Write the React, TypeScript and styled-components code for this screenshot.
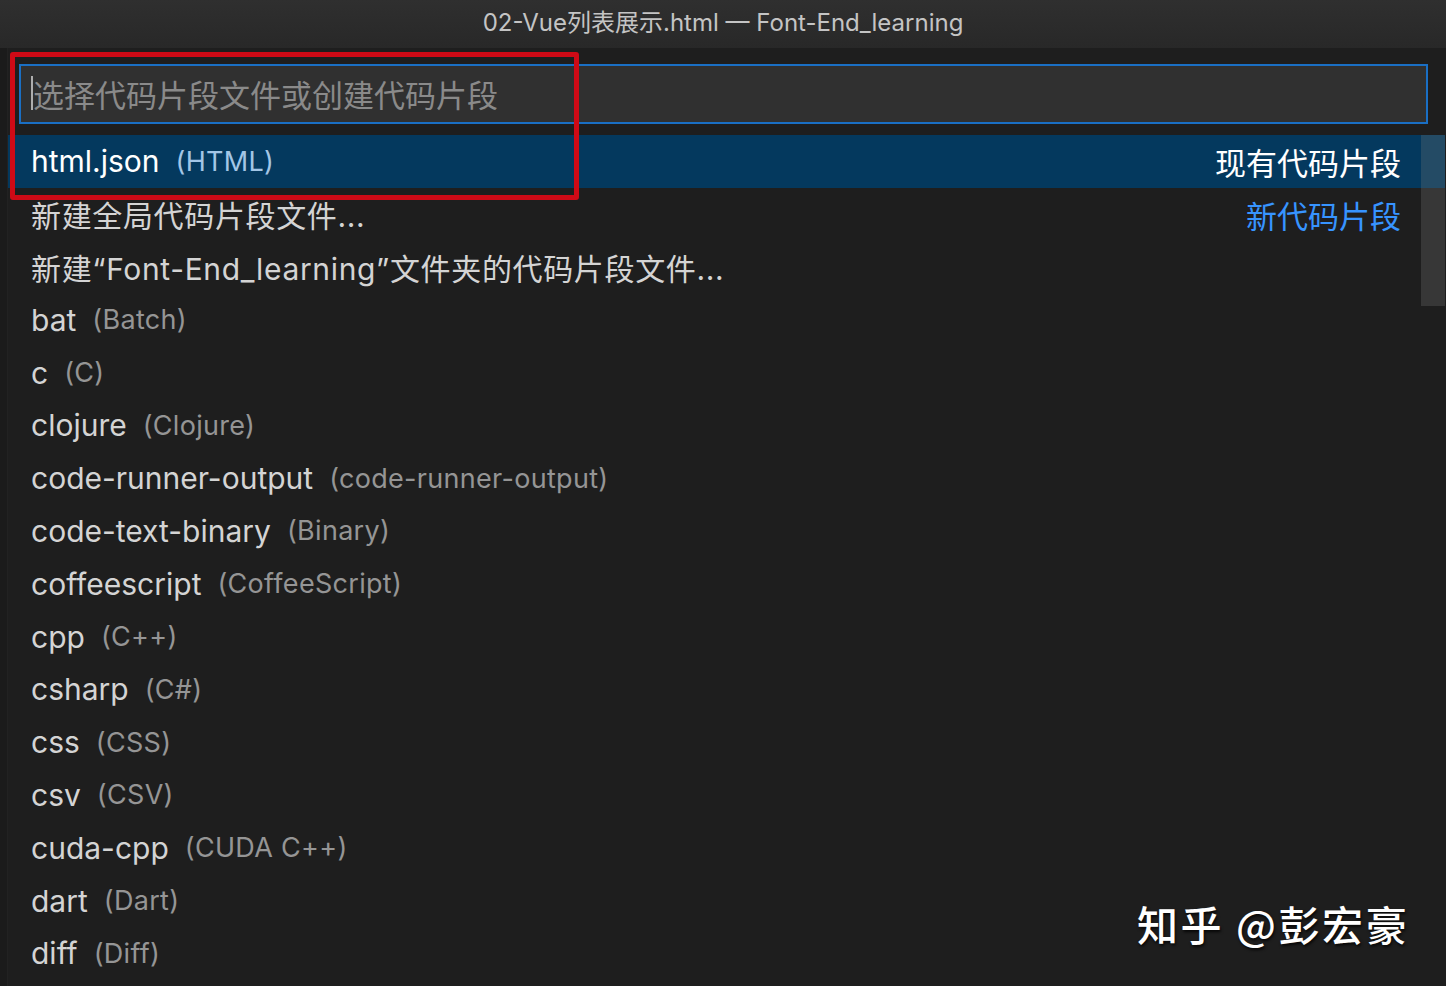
import React from "react";
import styled, { createGlobalStyle } from "styled-components";

const Global = createGlobalStyle`
  html, body { margin: 0; padding: 0; background: #1e1e1e; }
  body { font-family: Inter, "Noto Sans CJK SC", sans-serif; }
  * { box-sizing: border-box; }
`;

const Page = styled.div`
  position: relative;
  width: 1446px;
  height: 986px;
  overflow: hidden;
  display: flex;
  flex-direction: column;
  background: #1e1e1e;
`;

const TitleBar = styled.div`
  height: 48px;
  flex: none;
  display: flex;
  align-items: center;
  justify-content: center;
  background: linear-gradient(#2f2f2f, #282828);
  color: #c4c4c4;
  font-size: 24px;
  font-family: Inter, "Noto Sans CJK SC", sans-serif;
  padding-bottom: 8px;
`;

const Body = styled.div`
  flex: 1;
  display: flex;
  min-height: 0;
`;

const EdgeStrip = styled.div`
  width: 8px;
  flex: none;
  background: #1b1b1b;
  border-right: 1px solid #222;
`;

const Picker = styled.div`
  position: relative;
  flex: 1;
  display: flex;
  flex-direction: column;
  padding-top: 16px;
  background: #1e1e1e;
`;

const InputBox = styled.div`
  margin: 0 18px 0 11px;
  height: 60px;
  border: 2px solid #1a6fc4;
  background: #303030;
  display: flex;
  align-items: center;
  padding-left: 10px;
  padding-bottom: 2px;
`;

const Caret = styled.span`
  width: 2px;
  height: 34px;
  background: #aeaeae;
  flex: none;
`;

const Placeholder = styled.span`
  color: #8a8a8a;
  font-size: 31px;
  font-family: "Noto Sans CJK SC", sans-serif;
`;

const List = styled.div`
  position: relative;
  margin-top: 11px;
  margin-right: 1px;
  display: flex;
  flex-direction: column;
`;

const Row = styled.div<{ $selected?: boolean }>`
  height: 52.8px;
  display: flex;
  align-items: center;
  padding: 0 44px 0 23px;
  background: ${(p) => (p.$selected ? "#04395e" : "transparent")};
`;

const Label = styled.span<{ $selected?: boolean; $cjk?: boolean }>`
  color: ${(p) => (p.$selected ? "#ffffff" : "#d4d4d4")};
  font-size: 30px;
  font-family: Inter, "Noto Sans CJK SC", sans-serif;
  letter-spacing: ${(p) => (p.$cjk ? "0.65px" : "0")};
  white-space: nowrap;
`;

const Desc = styled.span<{ $selected?: boolean }>`
  margin-left: 16px;
  color: ${(p) => (p.$selected ? "#a3c6e6" : "#959595")};
  font-size: 27px;
  letter-spacing: 0.3px;
  font-family: Inter, "Noto Sans CJK SC", sans-serif;
  white-space: nowrap;
`;

const Detail = styled.span<{ $tone: "white" | "blue" }>`
  margin-left: auto;
  color: ${(p) => (p.$tone === "blue" ? "#3794ff" : "#ffffff")};
  font-size: 31px;
  font-family: "Noto Sans CJK SC", sans-serif;
  white-space: nowrap;
`;

const ScrollThumb = styled.div`
  position: absolute;
  top: 0;
  right: 0;
  width: 24px;
  height: 171px;
  background: rgba(121, 121, 121, 0.28);
`;

const Annotation = styled.div`
  position: absolute;
  left: 10px;
  top: 52px;
  width: 569px;
  height: 148px;
  border: 5px solid #cf0a16;
  border-radius: 3px;
  pointer-events: none;
`;

const Watermark = styled.div`
  position: absolute;
  left: 1137px;
  top: 893px;
  color: #ffffff;
  font-size: 41px;
  font-weight: 500;
  font-family: "Noto Sans CJK SC", sans-serif;
  text-shadow: 1px 2px 3px rgba(0, 0, 0, 0.8);
  letter-spacing: 2.6px;
  white-space: nowrap;
`;

type Item = { label: string; desc?: string; detail?: string; tone?: "white" | "blue"; selected?: boolean; cjk?: boolean };

const items: Item[] = [
  { label: "html.json", desc: "(HTML)", detail: "现有代码片段", tone: "white", selected: true },
  { label: "新建全局代码片段文件...", detail: "新代码片段", tone: "blue", cjk: true },
  { label: "新建“Font-End_learning”文件夹的代码片段文件...", cjk: true },
  { label: "bat", desc: "(Batch)" },
  { label: "c", desc: "(C)" },
  { label: "clojure", desc: "(Clojure)" },
  { label: "code-runner-output", desc: "(code-runner-output)" },
  { label: "code-text-binary", desc: "(Binary)" },
  { label: "coffeescript", desc: "(CoffeeScript)" },
  { label: "cpp", desc: "(C++)" },
  { label: "csharp", desc: "(C#)" },
  { label: "css", desc: "(CSS)" },
  { label: "csv", desc: "(CSV)" },
  { label: "cuda-cpp", desc: "(CUDA C++)" },
  { label: "dart", desc: "(Dart)" },
  { label: "diff", desc: "(Diff)" },
];

export default function App() {
  return (
    <Page>
      <Global />
      <TitleBar>02-Vue列表展示.html — Font-End_learning</TitleBar>
      <Body>
        <EdgeStrip />
        <Picker>
          <InputBox>
            <Caret />
            <Placeholder>选择代码片段文件或创建代码片段</Placeholder>
          </InputBox>
          <List>
            {items.map((it) => (
              <Row key={it.label} $selected={it.selected}>
                <Label $selected={it.selected} $cjk={it.cjk}>{it.label}</Label>
                {it.desc && <Desc $selected={it.selected}>{it.desc}</Desc>}
                {it.detail && <Detail $tone={it.tone ?? "white"}>{it.detail}</Detail>}
              </Row>
            ))}
            <ScrollThumb />
          </List>
        </Picker>
      </Body>
      <Annotation />
      <Watermark>知乎 @彭宏豪</Watermark>
    </Page>
  );
}
